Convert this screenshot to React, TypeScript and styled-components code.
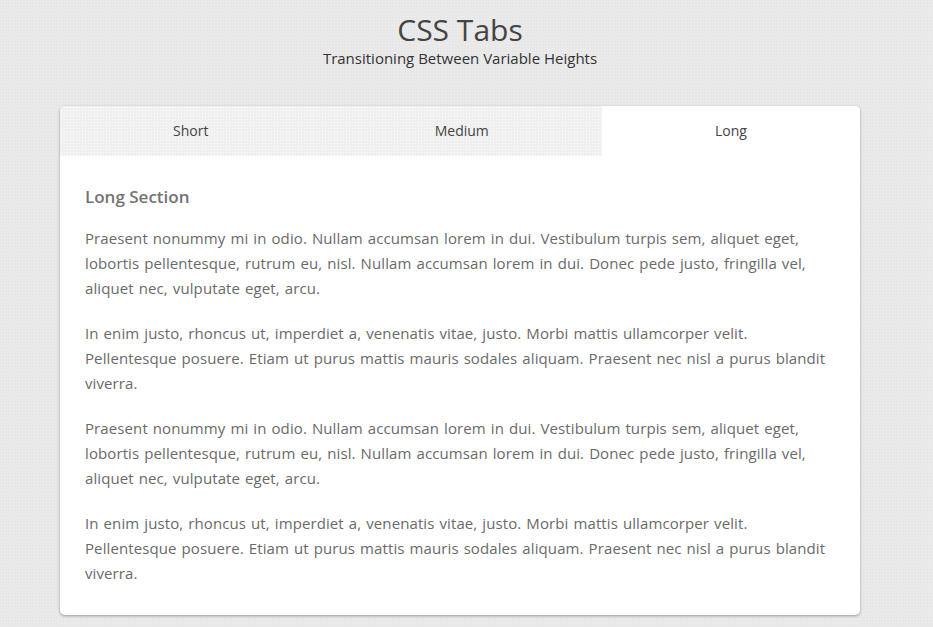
import * as React from "react"
import styled, { createGlobalStyle } from "styled-components"

const tabs = [
  { id: "short", label: "Short" },
  { id: "medium", label: "Medium" },
  { id: "long", label: "Long" },
]

const p1 =
  "Praesent nonummy mi in odio. Nullam accumsan lorem in dui. Vestibulum turpis sem, aliquet eget, lobortis pellentesque, rutrum eu, nisl. Nullam accumsan lorem in dui. Donec pede justo, fringilla vel, aliquet nec, vulputate eget, arcu."
const p2 =
  "In enim justo, rhoncus ut, imperdiet a, venenatis vitae, justo. Morbi mattis ullamcorper velit. Pellentesque posuere. Etiam ut purus mattis mauris sodales aliquam. Praesent nec nisl a purus blandit viverra."

const App = () => {
  const [active, setActive] = React.useState("long")
  return (
    <>
      <GlobalStyle />
      <Page>
        <Header>
          <Title>CSS Tabs</Title>
          <Subtitle>Transitioning Between Variable Heights</Subtitle>
        </Header>
        <Card>
          <TabBar>
            {tabs.map((t) => (
              <Tab key={t.id} $active={t.id === active} onClick={() => setActive(t.id)}>
                {t.label}
              </Tab>
            ))}
          </TabBar>
          <Panel>
            <SectionTitle>Long Section</SectionTitle>
            <Text>{p1}</Text>
            <Text>{p2}</Text>
            <Text>{p1}</Text>
            <Text>{p2}</Text>
          </Panel>
        </Card>
      </Page>
    </>
  )
}

export default App

const GlobalStyle = createGlobalStyle`
  html, body {
    margin: 0;
    padding: 0;
  }
  body {
    background-color: #e8e8e8;
    background-image: radial-gradient(rgba(255, 255, 255, 0.35) 0.6px, transparent 0.8px);
    background-size: 3px 3px;
    font-family: "Open Sans", "Liberation Sans", sans-serif;
    color: #666;
  }
`

const Page = styled.div`
  width: 920px;
  min-height: 627px;
  display: flex;
  flex-direction: column;
  align-items: center;
  padding-top: 12px;
  box-sizing: border-box;
`

const Header = styled.header`
  text-align: center;
  color: #444;
`

const Title = styled.h1`
  margin: 0;
  font-size: 30px;
  font-weight: normal;
  line-height: 36px;
  color: #444;
`

const Subtitle = styled.p`
  margin: 0;
  font-size: 15px;
  line-height: 20px;
  color: #333;
`

const Card = styled.div`
  width: 800px;
  margin-top: 38px;
  background: #fff;
  border-radius: 5px;
  box-shadow: 0 1px 3px rgba(0, 0, 0, 0.35);
  overflow: hidden;
`

const TabBar = styled.div`
  display: flex;
  background-color: #f0f0f0;
  background-image: radial-gradient(rgba(255, 255, 255, 0.9) 0.6px, transparent 0.8px);
  background-size: 3px 3px;
`

const Tab = styled.div<{ $active: boolean }>`
  flex: 1 1 auto;
  height: 50px;
  line-height: 50px;
  text-align: center;
  font-size: 14px;
  color: #444;
  cursor: pointer;
  background: ${(p) => (p.$active ? "#fff" : "transparent")};
`

const Panel = styled.div`
  padding: 28px 25px 29px;
`

const SectionTitle = styled.h2`
  margin: 0 0 16px;
  font-size: 17px;
  font-weight: 600;
  color: #737373;
  line-height: 26px;
`

const Text = styled.p`
  margin: 0 0 20px;
  font-size: 15px;
  line-height: 25px;
  letter-spacing: 0.1px;
  word-spacing: 1px;
  color: #6a6a6a;

  &:last-child {
    margin-bottom: 0;
  }
`
